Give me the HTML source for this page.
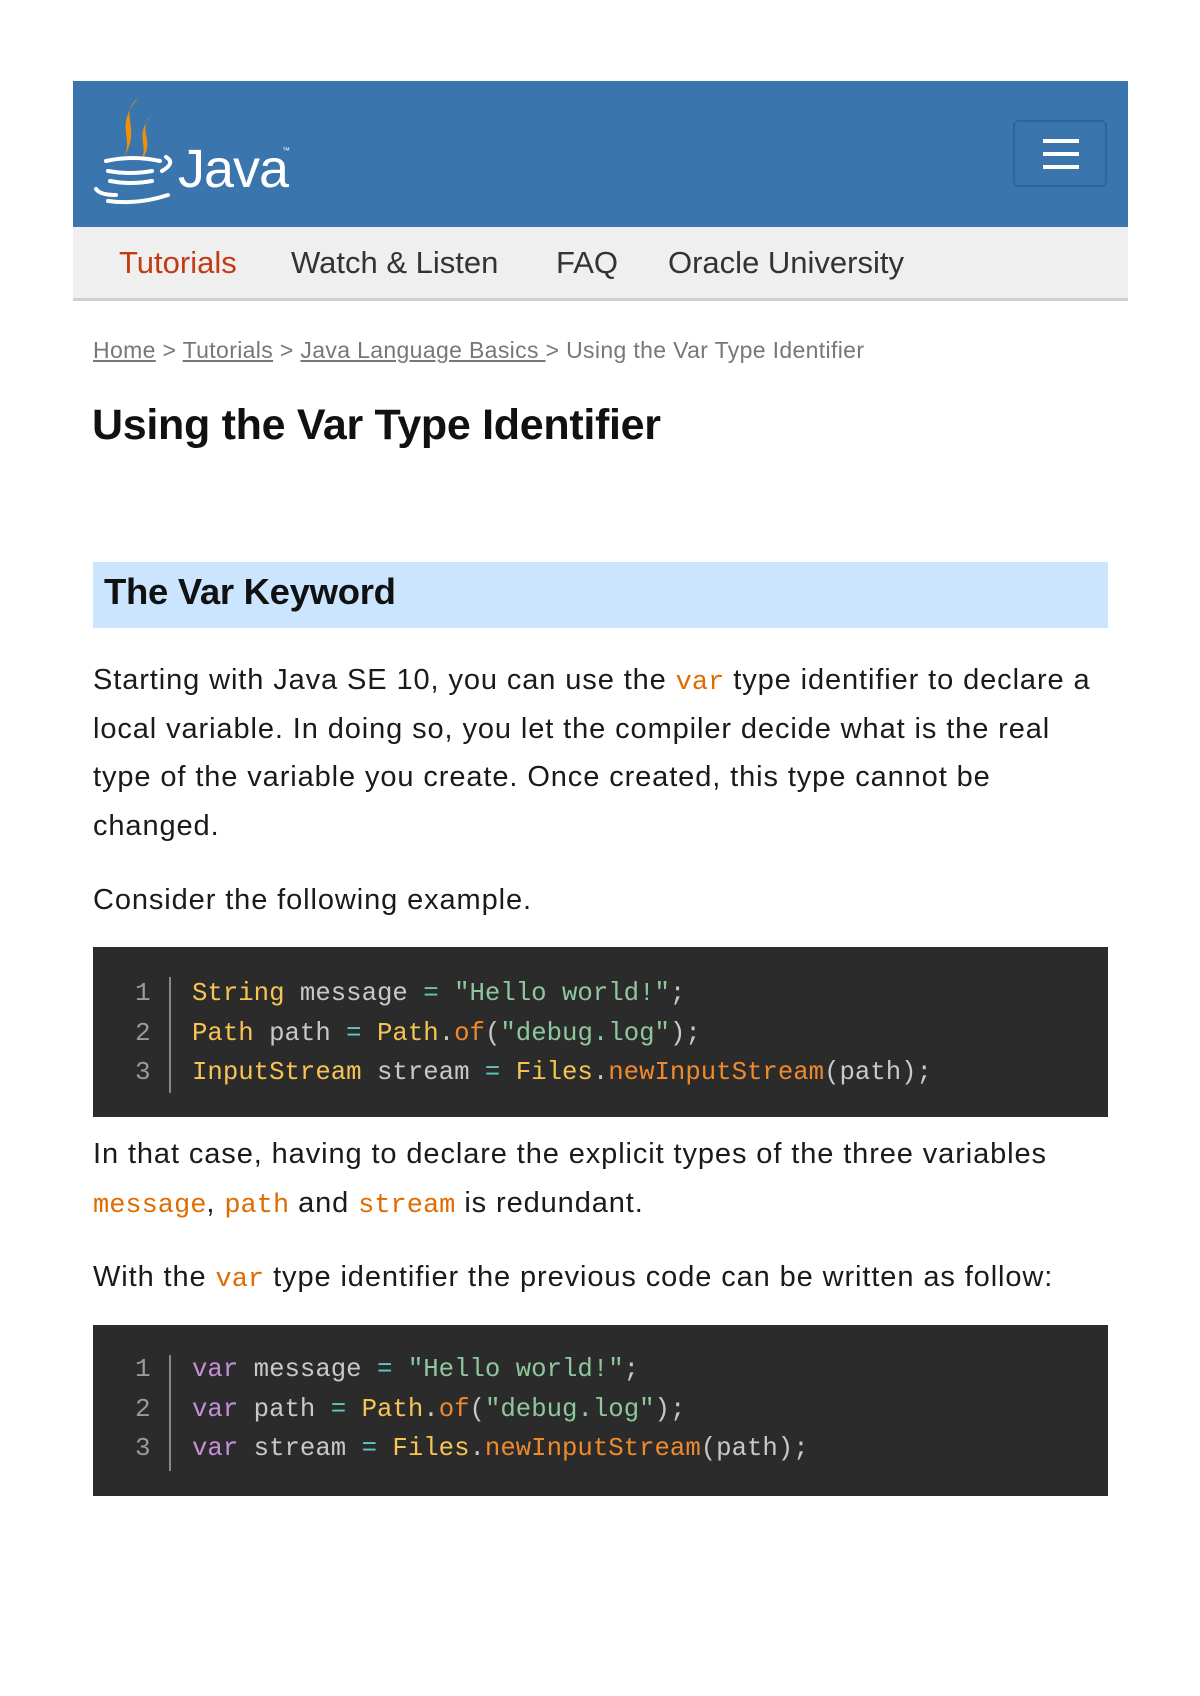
<!DOCTYPE html>
<html><head><meta charset="utf-8"><style>
*{margin:0;padding:0;box-sizing:border-box}
body{width:1200px;height:1696px;background:#fff;position:relative;font-family:"Liberation Sans",sans-serif;color:#1a1a1a;overflow:hidden}
.a{position:absolute;white-space:nowrap}
.hdr{left:73px;top:81px;width:1064px;height:146px;background:#3a75ae}
.nav{left:73px;top:227px;width:1064px;height:74px;background:#efefef;border-bottom:3px solid #cfcfcf}
.hdr,.nav{width:1055px}
.nv{top:245px;font-size:31px;color:#333}
.ham{left:1013px;top:120px;width:94px;height:67px;border:2px solid #2e659a;border-radius:6px}
.ham i{position:absolute;left:28px;width:36px;height:4px;background:#fff}
.bc{left:93px;top:337px;font-size:23px;letter-spacing:0.35px;color:#777}
.bc u{color:#777;text-decoration:underline}
h1{position:absolute;left:92px;top:401px;font-size:43px;font-weight:bold;color:#111;white-space:nowrap;letter-spacing:-0.3px}
.sec{left:93px;top:562px;width:1015px;height:66px;background:#cce5ff}
.sec span{position:absolute;left:11px;top:9px;font-size:36.5px;font-weight:bold;color:#111;letter-spacing:-0.3px}
.p{left:93px;font-size:29px;letter-spacing:0.9px;line-height:48.5px;color:#1a1a1a}
.c{font-family:"Liberation Mono",monospace;color:#e06c00;font-size:27px;line-height:1;letter-spacing:0}
.code{left:93px;width:1015px;height:170px;background:#2b2b2b}
.ln{position:absolute;left:42px;font-family:"Liberation Mono",monospace;font-size:26px;color:#9a9a9a;line-height:39.5px;top:27px}
.bar{position:absolute;left:76px;top:30px;width:2px;height:116px;background:#888}
.cl{position:absolute;left:99px;top:27px;font-family:"Liberation Mono",monospace;font-size:25.7px;line-height:39.5px;color:#c8c8c8;white-space:pre}
.y{color:#f7c453}.g{color:#8fc79c}.o{color:#ef8a2c}.t{color:#5fc8c0}.v{color:#c690d8}
</style></head><body>
<div class="a hdr"></div>
<svg class="a" style="left:90px;top:95px" width="210" height="110" viewBox="0 0 210 110">
<path d="M48 3 C28 20 52 32 34 62 C44 42 24 32 48 3Z" fill="#f0900a"/>
<path d="M62 20 C46 34 66 46 52 64 C58 48 44 40 62 20Z" fill="#f0900a"/>
<g fill="none" stroke="#fff" stroke-width="4" stroke-linecap="round">
<path d="M16 66 Q42 60 70 66"/><path d="M76 62 Q86 68 72 76"/>
<path d="M18 76 Q40 80 62 76"/>
<path d="M20 86 Q40 90 62 86"/>
<path d="M6 94 Q10 100 26 100"/><path d="M18 106 Q48 110 78 100"/>
</g>
<text x="88" y="92" fill="#fff" font-family="Liberation Sans" font-size="54" style="letter-spacing:-1px">Java</text>
<text x="192" y="58" fill="#fff" font-size="8" font-family="Liberation Sans">™</text>
</svg>
<div class="a ham"><i style="top:17px"></i><i style="top:30px"></i><i style="top:43px"></i></div>
<div class="a nav"></div>
<div class="a nv" style="left:119px;color:#c23b14">Tutorials</div>
<div class="a nv" style="left:291px">Watch &amp; Listen</div>
<div class="a nv" style="left:556px">FAQ</div>
<div class="a nv" style="left:668px">Oracle University</div>
<div class="a bc"><u>Home</u> &gt; <u>Tutorials</u> &gt; <u>Java Language Basics </u> &gt; Using the Var Type Identifier</div>
<h1>Using the Var Type Identifier</h1>
<div class="a sec"><span>The Var Keyword</span></div>
<div class="a p" style="top:656px">Starting with Java SE 10, you can use the <span class="c">var</span> type identifier to declare a<br>local variable. In doing so, you let the compiler decide what is the real<br>type of the variable you create. Once created, this type cannot be<br>changed.</div>
<div class="a p" style="top:876px">Consider the following example.</div>
<div class="a code" style="top:947px"><div class="ln">1<br>2<br>3</div><div class="bar"></div><div class="cl"><span class="y">String</span> message <span class="t">=</span> <span class="g">"Hello world!"</span>;
<span class="y">Path</span> path <span class="t">=</span> <span class="y">Path</span>.<span class="o">of</span>(<span class="g">"debug.log"</span>);
<span class="y">InputStream</span> stream <span class="t">=</span> <span class="y">Files</span>.<span class="o">newInputStream</span>(path);</div></div>
<div class="a p" style="top:1130px">In that case, having to declare the explicit types of the three variables<br><span class="c">message</span>, <span class="c">path</span> and <span class="c">stream</span> is redundant.</div>
<div class="a p" style="top:1253px">With the <span class="c">var</span> type identifier the previous code can be written as follow:</div>
<div class="a code" style="top:1325px;height:171px"><div class="ln" style="top:25px">1<br>2<br>3</div><div class="bar"></div><div class="cl" style="top:25px"><span class="v">var</span> message <span class="t">=</span> <span class="g">"Hello world!"</span>;
<span class="v">var</span> path <span class="t">=</span> <span class="y">Path</span>.<span class="o">of</span>(<span class="g">"debug.log"</span>);
<span class="v">var</span> stream <span class="t">=</span> <span class="y">Files</span>.<span class="o">newInputStream</span>(path);</div></div>
</body></html>
